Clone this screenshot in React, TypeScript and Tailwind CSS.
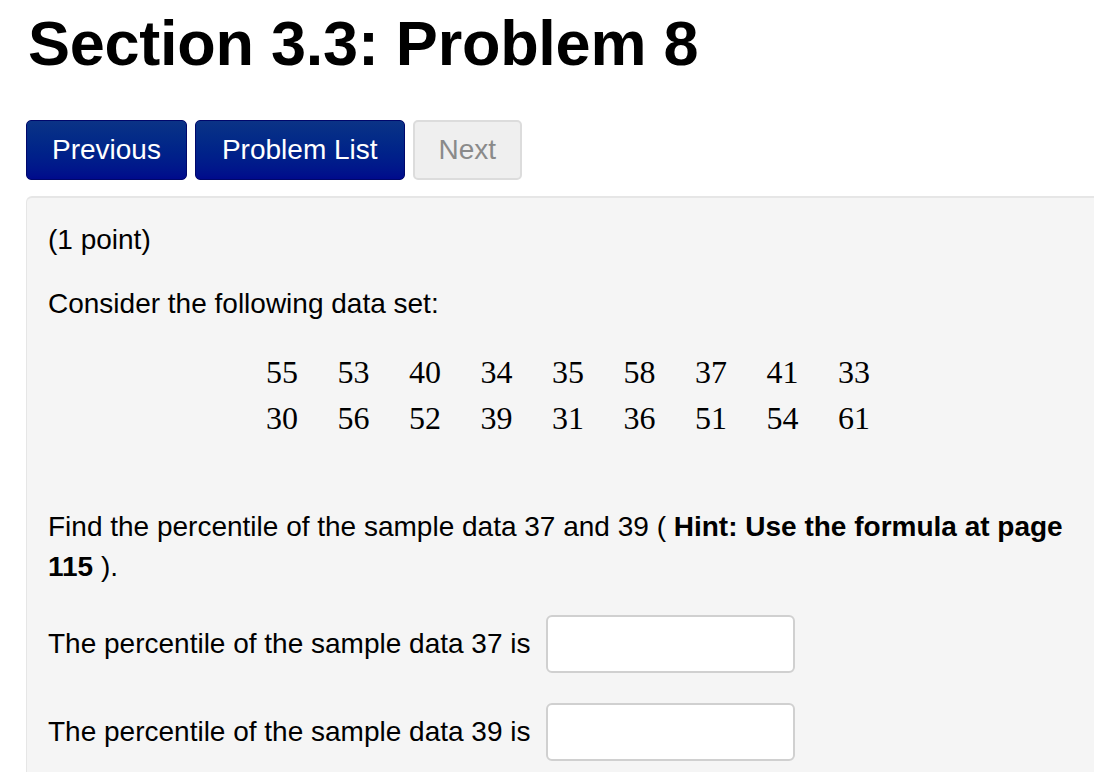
const ROWS = [
  ['55', '53', '40', '34', '35', '58', '37', '41', '33'],
  ['30', '56', '52', '39', '31', '36', '51', '54', '61'],
];

export default function App() {
  return (
    <div className="min-h-[772px] bg-white pl-[26px] font-['Liberation_Sans',Arial,sans-serif] text-black overflow-hidden">
      <h1 className="pl-[2px] pt-[9px] text-[63px] font-bold leading-[68px] tracking-[-0.25px]">
        Section 3.3: Problem 8
      </h1>

      {/* nav buttons */}
      <div className="mt-[43px] flex gap-2">
        <button
          type="button"
          className="h-[60px] rounded-[5px] border border-[#00076b] bg-gradient-to-b from-[#0b3386] to-[#000a8c] px-[25px] text-[28px] text-white"
        >
          Previous
        </button>
        <button
          type="button"
          className="h-[60px] rounded-[5px] border border-[#00076b] bg-gradient-to-b from-[#0b3386] to-[#000a8c] px-[26px] text-[28px] text-white"
        >
          Problem List
        </button>
        <button
          type="button"
          className="h-[60px] rounded-[5px] border-2 border-[#dcdcdc] bg-[#efefef] px-[24px] text-[28px] text-[#8a8a8a]"
        >
          Next
        </button>
      </div>

      {/* problem body */}
      <div className="mt-[16px] -mr-4 rounded-tl-[6px] border-t-2 border-l border-[#e6e6e6] bg-[#f5f5f5] pl-[21px] pt-[22px] pr-6 pb-10 text-[28px] leading-[40px]">
        <p>(1 point)</p>
        <p className="mt-[24px]">Consider the following data set:</p>

        <table className="ml-[218px] mt-[25px] font-['Liberation_Serif','Times_New_Roman',serif] text-[32px] leading-[46px]">
          <tbody>
            {ROWS.map((row, i) => (
              <tr key={i}>
                {row.map((n, j) => (
                  <td key={j} className="w-[71.5px] p-0 text-left">
                    {n}
                  </td>
                ))}
              </tr>
            ))}
          </tbody>
        </table>

        <p className="mt-[66px]">
          Find the percentile of the sample data 37 and 39 ({' '}
          <b>Hint: Use the formula at page 115</b> ).
        </p>

        <div className="mt-[28px] flex items-center gap-[15px]">
          <span>The percentile of the sample data 37 is</span>
          <input className="h-[58px] w-[249px] rounded-[6px] border-2 border-[#d0d0d0] bg-white" />
        </div>
        <div className="mt-[30px] flex items-center gap-[15px]">
          <span>The percentile of the sample data 39 is</span>
          <input className="h-[58px] w-[249px] rounded-[6px] border-2 border-[#d0d0d0] bg-white" />
        </div>
      </div>
    </div>
  );
}
